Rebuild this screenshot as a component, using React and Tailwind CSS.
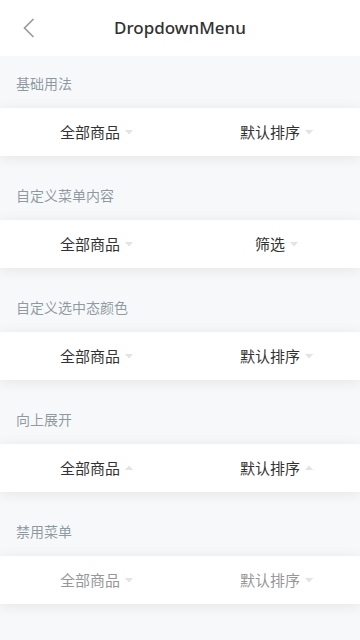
import React from 'react';

const sections = [
  { title: '基础用法', items: ['全部商品', '默认排序'] },
  { title: '自定义菜单内容', items: ['全部商品', '筛选'] },
  { title: '自定义选中态颜色', items: ['全部商品', '默认排序'] },
  { title: '向上展开', items: ['全部商品', '默认排序'], up: true },
  { title: '禁用菜单', items: ['全部商品', '默认排序'], disabled: true },
];

const MenuTitle = ({ label, up, disabled }) => (
  <div className="flex-1 flex items-center justify-center h-full">
    <span
      className={`relative px-2 text-[15px] leading-[22px] ${disabled ? 'text-[#969799]' : 'text-[#323233]'}`}
    >
      {label}
      <span
        className={`absolute right-[-4px] top-1/2 w-[6px] h-[6px] border-[3px] border-transparent border-l-[#dcdee0] border-b-[#dcdee0] opacity-80 ${
          up ? 'mt-[-1px] rotate-[135deg]' : 'mt-[-5px] -rotate-45'
        }`}
      />
    </span>
  </div>
);

const App = () => {
  return (
    <div className="min-h-[640px] bg-[#f7f8fa] font-['Noto_Sans','Noto_Sans_CJK_SC',sans-serif]">
      {/* 导航栏 */}
      <div className="relative h-14 bg-white flex items-center justify-center">
        <svg
          className="absolute left-[18px] top-[16px] w-6 h-6 text-[#969799]"
          viewBox="0 0 24 24"
          fill="none"
          stroke="currentColor"
          strokeWidth={1.6}
        >
          <path d="M15.5 3 L6.5 12 L15.5 21" />
        </svg>
        <h1 className="text-[17px] font-medium text-[#323233]">DropdownMenu</h1>
      </div>

      {sections.map((s, i) => (
        <div key={i}>
          <h2
            className={`px-4 pb-4 text-sm leading-4 font-normal text-[rgba(69,90,100,0.6)] ${
              i === 0 ? 'pt-5' : 'pt-8'
            }`}
          >
            {s.title}
          </h2>
          <div className="flex h-12 bg-white shadow-[0_2px_12px_rgba(100,101,102,0.12)]">
            {s.items.map((label, j) => (
              <MenuTitle key={j} label={label} up={s.up} disabled={s.disabled} />
            ))}
          </div>
        </div>
      ))}
    </div>
  );
};

export default App;
